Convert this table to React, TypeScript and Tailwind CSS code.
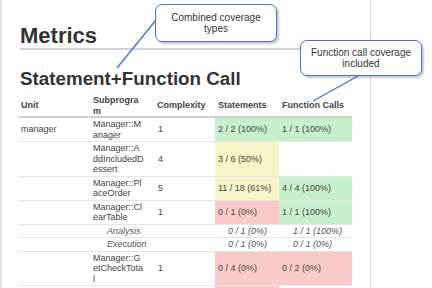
import clsx from "clsx";

const W = ["w-[72px]", "w-[64px]", "w-[61px]", "w-[64px]", "w-[73px]"];

const BG: Record<string, string> = {
  g: "bg-[#c8efcb]",
  y: "bg-[#f7f4c7]",
  r: "bg-[#f9c9c9]",
  n: "",
};

type Row = {
  unit?: string;
  sub: string;
  cx: string;
  st: string;
  stc: string;
  fn: string;
  fnc: string;
  italic?: boolean;
};

const rows: Row[] = [
  { unit: "manager", sub: "Manager::Manager", cx: "1", st: "2 / 2 (100%)", stc: "g", fn: "1 / 1 (100%)", fnc: "g" },
  { sub: "Manager::AddIncludedDessert", cx: "4", st: "3 / 6 (50%)", stc: "y", fn: "", fnc: "n" },
  { sub: "Manager::PlaceOrder", cx: "5", st: "11 / 18 (61%)", stc: "y", fn: "4 / 4 (100%)", fnc: "g" },
  { sub: "Manager::ClearTable", cx: "1", st: "0 / 1 (0%)", stc: "r", fn: "1 / 1 (100%)", fnc: "g" },
  { sub: "Analysis", cx: "", st: "0 / 1 (0%)", stc: "n", fn: "1 / 1 (100%)", fnc: "n", italic: true },
  { sub: "Execution", cx: "", st: "0 / 1 (0%)", stc: "n", fn: "0 / 1 (0%)", fnc: "n", italic: true },
  { sub: "Manager::GetCheckTotal", cx: "1", st: "0 / 4 (0%)", stc: "r", fn: "0 / 2 (0%)", fnc: "r" },
];

function Cell({ w, bg, className, children }: { w: string; bg?: string; className?: string; children?: React.ReactNode }) {
  return <div className={clsx("flex items-center shrink-0 py-[1px]", w, bg, className)}>{children}</div>;
}

function Callout({ className, children }: { className: string; children: React.ReactNode }) {
  return (
    <div
      className={clsx(
        "absolute w-[122px] flex items-center justify-center text-center text-[10px] leading-[11.5px] text-[#333] bg-white border-[1.5px] border-[#4b6fdd] rounded-[7px] shadow-[2px_2px_2px_rgba(0,0,0,0.22)]",
        className
      )}
    >
      {children}
    </div>
  );
}

export default function App() {
  return (
    <div className="relative flex w-[432px] h-[288px] overflow-hidden bg-white font-['Liberation_Sans',Arial,sans-serif]">
      <div className="w-[3px] shrink-0 bg-gradient-to-r from-[#d9d9d9] to-white" />
      <div className="w-[368px] shrink-0 border-r border-[#e3e3e3] pl-[17px]">
        <h1 className="mt-[25px] text-[22px] leading-[22px] font-bold text-[#333]">Metrics</h1>
        <div className="mt-[1px] h-[2px] bg-[#d2d2d2]" />
        <h2 className="mt-[19px] text-[18.8px] leading-[19px] font-bold text-[#333]">Statement+Function Call</h2>

        <div className="mt-[4px] -ml-[2px] w-[334px] text-[9px] leading-[10.5px] text-[#444]">
          <div className="flex border-b-2 border-[#cfcfcf] font-bold">
            <Cell w={W[0]} className="pl-[3px] pt-[3px] pb-0">Unit</Cell>
            <Cell w={W[1]} className="pl-[3px] pt-[3px] pb-0">
              <div className="w-[51px] break-all">Subprogram</div>
            </Cell>
            <Cell w={W[2]} className="pl-[3px] pt-[3px] pb-0">Complexity</Cell>
            <Cell w={W[3]} className="pl-[3px] pt-[3px] pb-0">Statements</Cell>
            <Cell w={W[4]} className="pl-[3px] pt-[3px] pb-0">Function Calls</Cell>
          </div>

          {rows.map((r, i) => (
            <div key={i} className={clsx("flex border-b border-[#e6e6e6]", r.italic && "italic text-[#555]")}>
              <Cell w={W[0]} className="pl-[3px]">{r.unit}</Cell>
              {r.italic ? (
                <Cell w={W[1]} className="pl-[17px]">{r.sub}</Cell>
              ) : (
                <Cell w={W[1]} className="pl-[3px]">
                  <div className="w-[51px] break-all">{r.sub}</div>
                </Cell>
              )}
              <Cell w={W[2]} className="pl-[4px]">{r.cx}</Cell>
              <Cell w={W[3]} bg={BG[r.stc]} className={r.italic ? "pl-[13px]" : "pl-[3px]"}>{r.st}</Cell>
              <Cell w={W[4]} bg={BG[r.fnc]} className={r.italic ? "pl-[14px]" : "pl-[3px]"}>{r.fn}</Cell>
            </div>
          ))}

          {/* next row, only its top edge is in view */}
          <div className="flex h-[20px]">
            <div className={clsx("ml-[197px]", W[3], BG.r)} />
          </div>
        </div>
      </div>

      <svg className="absolute left-0 top-0 pointer-events-none" width="432" height="288">
        <line x1="156" y1="20" x2="117" y2="68" stroke="#4b6fdd" strokeWidth="1.4" />
        <line x1="358" y1="76" x2="313" y2="101" stroke="#4b6fdd" strokeWidth="1.4" />
      </svg>

      <Callout className="left-[155px] top-[4px] h-[38px]">
        Combined coverage
        <br />
        types
      </Callout>
      <Callout className="left-[300px] top-[40px] h-[36px]">
        Function call coverage
        <br />
        included
      </Callout>
    </div>
  );
}
